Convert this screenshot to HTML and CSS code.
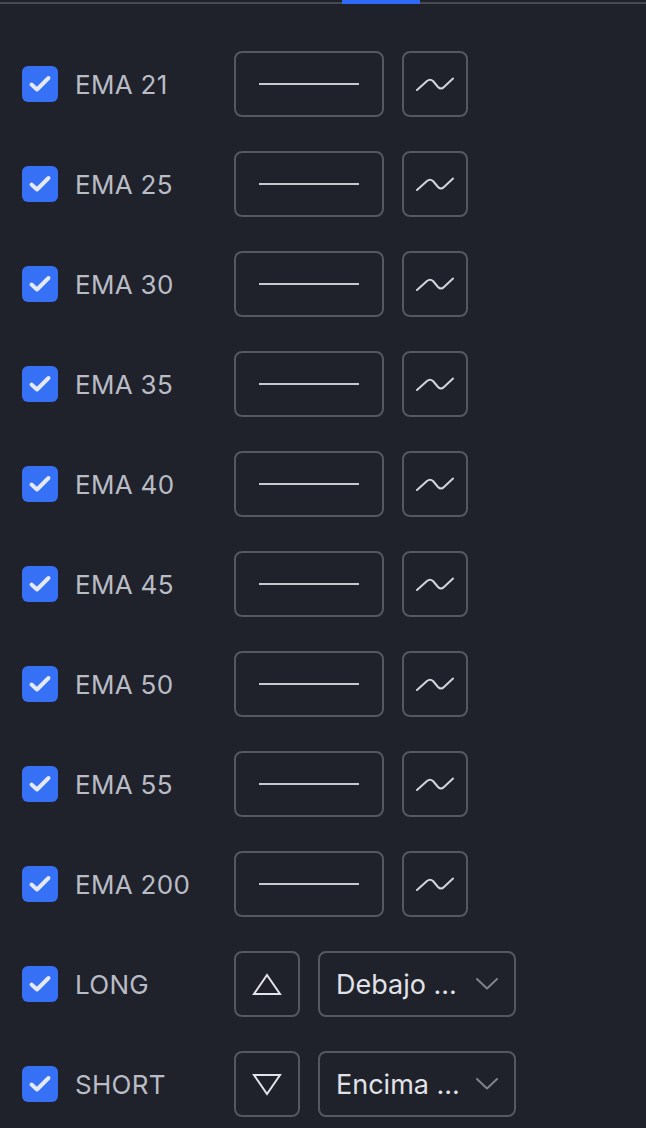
FILE: index.html
```html
<!DOCTYPE html>
<html lang="es">
  <head>
    <meta charset="UTF-8" />
    <meta name="viewport" content="width=device-width, initial-scale=1.0" />
    <title>Indicadores EMA</title>
    <link rel="stylesheet" href="styles.css">
  </head>
  <body>
    <div class="tabBar">
      <div class="tabIndicator"></div>
    </div>

    <div class="indicatorList">
      <div class="indicatorRow">
        <label class="toggle">
          <span class="checkBox"><svg viewBox="0 0 36 36"><path d="M9.5 18.5 L15 23.5 L26.5 12"/></svg></span>
          <span class="toggleName">EMA 21</span>
        </label>
        <div class="controls">
          <button class="outlineButton lineButton"><span class="lineSample"></span></button>
          <button class="outlineButton squareButton"><svg class="waveIcon" viewBox="0 0 38 14"><path d="M1 13 L11 4 Q14 1.5 17 4 L22 10 Q25 13 28 10 L37 1.5"/></svg></button>
        </div>
      </div>

      <div class="indicatorRow">
        <label class="toggle">
          <span class="checkBox"><svg viewBox="0 0 36 36"><path d="M9.5 18.5 L15 23.5 L26.5 12"/></svg></span>
          <span class="toggleName">EMA 25</span>
        </label>
        <div class="controls">
          <button class="outlineButton lineButton"><span class="lineSample"></span></button>
          <button class="outlineButton squareButton"><svg class="waveIcon" viewBox="0 0 38 14"><path d="M1 13 L11 4 Q14 1.5 17 4 L22 10 Q25 13 28 10 L37 1.5"/></svg></button>
        </div>
      </div>

      <div class="indicatorRow">
        <label class="toggle">
          <span class="checkBox"><svg viewBox="0 0 36 36"><path d="M9.5 18.5 L15 23.5 L26.5 12"/></svg></span>
          <span class="toggleName">EMA 30</span>
        </label>
        <div class="controls">
          <button class="outlineButton lineButton"><span class="lineSample"></span></button>
          <button class="outlineButton squareButton"><svg class="waveIcon" viewBox="0 0 38 14"><path d="M1 13 L11 4 Q14 1.5 17 4 L22 10 Q25 13 28 10 L37 1.5"/></svg></button>
        </div>
      </div>

      <div class="indicatorRow">
        <label class="toggle">
          <span class="checkBox"><svg viewBox="0 0 36 36"><path d="M9.5 18.5 L15 23.5 L26.5 12"/></svg></span>
          <span class="toggleName">EMA 35</span>
        </label>
        <div class="controls">
          <button class="outlineButton lineButton"><span class="lineSample"></span></button>
          <button class="outlineButton squareButton"><svg class="waveIcon" viewBox="0 0 38 14"><path d="M1 13 L11 4 Q14 1.5 17 4 L22 10 Q25 13 28 10 L37 1.5"/></svg></button>
        </div>
      </div>

      <div class="indicatorRow">
        <label class="toggle">
          <span class="checkBox"><svg viewBox="0 0 36 36"><path d="M9.5 18.5 L15 23.5 L26.5 12"/></svg></span>
          <span class="toggleName">EMA 40</span>
        </label>
        <div class="controls">
          <button class="outlineButton lineButton"><span class="lineSample"></span></button>
          <button class="outlineButton squareButton"><svg class="waveIcon" viewBox="0 0 38 14"><path d="M1 13 L11 4 Q14 1.5 17 4 L22 10 Q25 13 28 10 L37 1.5"/></svg></button>
        </div>
      </div>

      <div class="indicatorRow">
        <label class="toggle">
          <span class="checkBox"><svg viewBox="0 0 36 36"><path d="M9.5 18.5 L15 23.5 L26.5 12"/></svg></span>
          <span class="toggleName">EMA 45</span>
        </label>
        <div class="controls">
          <button class="outlineButton lineButton"><span class="lineSample"></span></button>
          <button class="outlineButton squareButton"><svg class="waveIcon" viewBox="0 0 38 14"><path d="M1 13 L11 4 Q14 1.5 17 4 L22 10 Q25 13 28 10 L37 1.5"/></svg></button>
        </div>
      </div>

      <div class="indicatorRow">
        <label class="toggle">
          <span class="checkBox"><svg viewBox="0 0 36 36"><path d="M9.5 18.5 L15 23.5 L26.5 12"/></svg></span>
          <span class="toggleName">EMA 50</span>
        </label>
        <div class="controls">
          <button class="outlineButton lineButton"><span class="lineSample"></span></button>
          <button class="outlineButton squareButton"><svg class="waveIcon" viewBox="0 0 38 14"><path d="M1 13 L11 4 Q14 1.5 17 4 L22 10 Q25 13 28 10 L37 1.5"/></svg></button>
        </div>
      </div>

      <div class="indicatorRow">
        <label class="toggle">
          <span class="checkBox"><svg viewBox="0 0 36 36"><path d="M9.5 18.5 L15 23.5 L26.5 12"/></svg></span>
          <span class="toggleName">EMA 55</span>
        </label>
        <div class="controls">
          <button class="outlineButton lineButton"><span class="lineSample"></span></button>
          <button class="outlineButton squareButton"><svg class="waveIcon" viewBox="0 0 38 14"><path d="M1 13 L11 4 Q14 1.5 17 4 L22 10 Q25 13 28 10 L37 1.5"/></svg></button>
        </div>
      </div>

      <div class="indicatorRow">
        <label class="toggle">
          <span class="checkBox"><svg viewBox="0 0 36 36"><path d="M9.5 18.5 L15 23.5 L26.5 12"/></svg></span>
          <span class="toggleName">EMA 200</span>
        </label>
        <div class="controls">
          <button class="outlineButton lineButton"><span class="lineSample"></span></button>
          <button class="outlineButton squareButton"><svg class="waveIcon" viewBox="0 0 38 14"><path d="M1 13 L11 4 Q14 1.5 17 4 L22 10 Q25 13 28 10 L37 1.5"/></svg></button>
        </div>
      </div>

      <div class="indicatorRow">
        <label class="toggle">
          <span class="checkBox"><svg viewBox="0 0 36 36"><path d="M9.5 18.5 L15 23.5 L26.5 12"/></svg></span>
          <span class="toggleName">LONG</span>
        </label>
        <div class="controls">
          <button class="outlineButton squareButton"><svg class="arrowIcon" viewBox="0 0 30 23"><path d="M15 2 L28 21 L2 21 Z"/></svg></button>
          <button class="outlineButton selectButton">
            <span class="selectText">Debajo ...</span>
            <svg class="chevron" viewBox="0 0 22 12"><path d="M1 1 L11 10.5 L21 1"/></svg>
          </button>
        </div>
      </div>

      <div class="indicatorRow">
        <label class="toggle">
          <span class="checkBox"><svg viewBox="0 0 36 36"><path d="M9.5 18.5 L15 23.5 L26.5 12"/></svg></span>
          <span class="toggleName">SHORT</span>
        </label>
        <div class="controls">
          <button class="outlineButton squareButton"><svg class="arrowIcon" viewBox="0 0 30 23"><path d="M2 2 L28 2 L15 21 Z"/></svg></button>
          <button class="outlineButton selectButton">
            <span class="selectText">Encima ...</span>
            <svg class="chevron" viewBox="0 0 22 12"><path d="M1 1 L11 10.5 L21 1"/></svg>
          </button>
        </div>
      </div>
    </div>
  </body>
</html>
```

FILE: styles.css
```css
body {
  background-color: #1f212b;
  color: #b9bcc5;
  font-family: Inter, 'Noto Sans', sans-serif;
  margin: 0;
  padding: 0;
}

.tabBar {
  height: 4px;
  display: flex;
  align-items: flex-end;
  padding-left: 342px;
  background: linear-gradient(to bottom, transparent 2px, #484a53 2px);
}

.tabIndicator {
  width: 78px;
  height: 4px;
  background-color: #2f6bf6;
}

.indicatorList {
  display: flex;
  flex-direction: column;
  gap: 34px;
  padding: 47px 0 0 22px;
}

.indicatorRow {
  display: flex;
  align-items: center;
  height: 66px;
}

.toggle {
  display: flex;
  align-items: center;
  width: 212px;
  cursor: pointer;
}

.checkBox {
  width: 36px;
  height: 36px;
  border-radius: 6px;
  background-color: #3570f5;
  display: flex;
  margin-right: 17px;
}

.checkBox svg {
  width: 36px;
  height: 36px;
  fill: none;
  stroke: #e4e8f3;
  stroke-width: 4;
  stroke-linecap: round;
  stroke-linejoin: round;
}

.toggleName {
  font-size: 26px;
  letter-spacing: 0.3px;
}

.controls {
  display: flex;
  gap: 18px;
}

.outlineButton {
  height: 66px;
  border: 2px solid #555861;
  border-radius: 8px;
  background: transparent;
  display: flex;
  align-items: center;
  justify-content: center;
  padding: 0;
  cursor: pointer;
}

.lineButton {
  width: 150px;
}

.lineSample {
  width: 100px;
  height: 2px;
  background-color: #c6c8ce;
}

.squareButton {
  width: 66px;
}

.waveIcon {
  width: 38px;
  height: 14px;
  fill: none;
  stroke: #d2d4da;
  stroke-width: 2;
  stroke-linecap: round;
  stroke-linejoin: round;
}

.arrowIcon {
  width: 30px;
  height: 23px;
  fill: none;
  stroke: #e2e3e8;
  stroke-width: 2;
  stroke-linejoin: miter;
}

.selectButton {
  width: 198px;
  justify-content: space-between;
  padding: 0 16px 0 16px;
}

.selectText {
  font-family: Inter, 'Noto Sans', sans-serif;
  font-size: 27px;
  color: #e1e2e7;
}

.chevron {
  width: 22px;
  height: 12px;
  fill: none;
  stroke: #7f828b;
  stroke-width: 2;
  stroke-linecap: round;
  stroke-linejoin: round;
}
```
